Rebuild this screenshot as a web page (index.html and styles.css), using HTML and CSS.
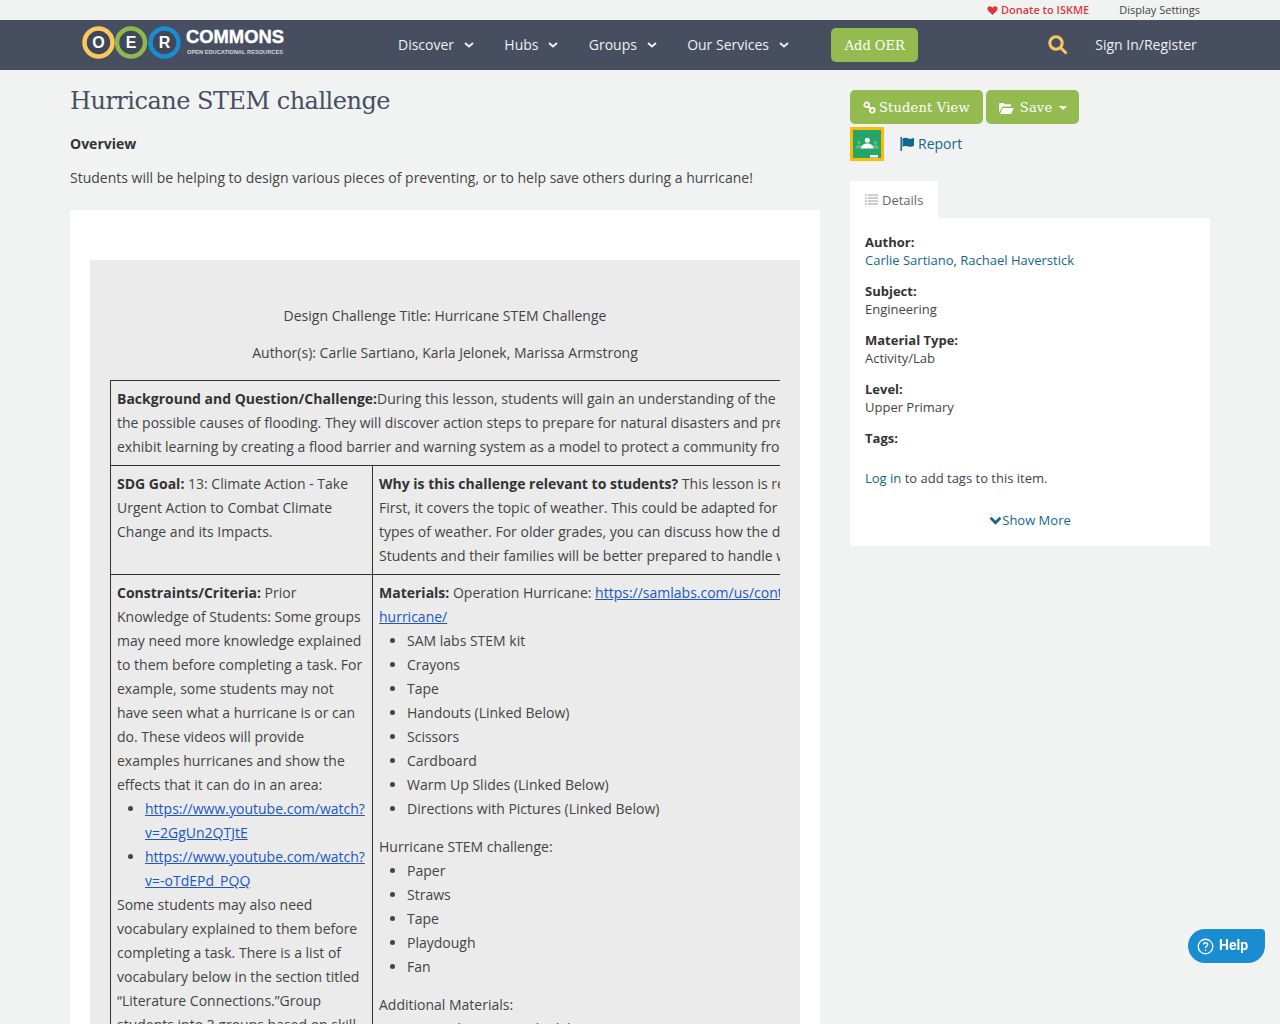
FILE: index.html
```html
<!DOCTYPE html>
<html lang="en">
<head>
    <meta charset="UTF-8">
    <title>Hurricane STEM challenge</title>
    <link rel="stylesheet" href="styles.css">
</head>
<body>
    <div class="top-bar">
        <a class="donate" href="#">
            <svg class="heart" viewBox="0 0 24 24"><path d="M12 22 2.600 12.400C.2 9.800.4 6 2.800 4c2.400-2 6-1.600 8 .8l1.200 1.400 1.200-1.400c2-2.400 5.600-2.800 8-.8 2.400 2 2.600 5.800.2 8.400z"/></svg>
            Donate to ISKME
        </a>
        <a class="display-settings" href="#">Display Settings</a>
    </div>

    <nav class="main-nav">
        <a class="logo" href="#">
            <svg width="205" height="40" viewBox="0 0 205 40">
                <circle cx="17.500" cy="17.500" r="14" class="ring ring-yellow"/>
                <circle cx="50" cy="17.500" r="14" class="ring ring-green"/>
                <circle cx="83.500" cy="17.500" r="14" class="ring ring-blue"/>
                <text x="17.500" y="23.200" class="logo-letter">O</text>
                <text x="50" y="23.200" class="logo-letter">E</text>
                <text x="83.500" y="23.200" class="logo-letter">R</text>
                <text x="105" y="18" class="logo-name" textLength="98" lengthAdjust="spacingAndGlyphs">COMMONS</text>
                <text x="106" y="28.500" class="logo-sub" textLength="96" lengthAdjust="spacingAndGlyphs">OPEN EDUCATIONAL RESOURCES</text>
            </svg>
        </a>
        <ul class="nav-links">
            <li><a href="#">Discover <svg class="nav-chevron" viewBox="0 0 10 6"><path d="M1 1l4 3.500L9 1"/></svg></a></li>
            <li><a href="#">Hubs <svg class="nav-chevron" viewBox="0 0 10 6"><path d="M1 1l4 3.500L9 1"/></svg></a></li>
            <li><a href="#">Groups <svg class="nav-chevron" viewBox="0 0 10 6"><path d="M1 1l4 3.500L9 1"/></svg></a></li>
            <li><a href="#">Our Services <svg class="nav-chevron" viewBox="0 0 10 6"><path d="M1 1l4 3.500L9 1"/></svg></a></li>
        </ul>
        <a class="btn add-oer" href="#">Add OER</a>
        <svg class="nav-search" viewBox="0 0 20 20"><circle cx="8" cy="8" r="6.200"/><path d="M12.500 12.500 18.500 18.500"/></svg>
        <a class="sign-in" href="#">Sign In/Register</a>
    </nav>

    <div class="page">
        <main class="content">
            <h1>Hurricane STEM challenge</h1>
            <h2 class="overview-title">Overview</h2>
            <p class="overview-text">Students will be helping to design various pieces of preventing, or to help save others during a hurricane!</p>

            <div class="card">
                <div class="challenge">
                    <div class="challenge-head">
                        <p>Design Challenge Title: Hurricane STEM Challenge</p>
                        <p>Author(s): Carlie Sartiano, Karla Jelonek, Marissa Armstrong</p>
                    </div>
                    <div class="table-clip">
                        <table class="challenge-table">
                            <colgroup>
                                <col class="col-left">
                                <col>
                            </colgroup>
                            <tr>
                                <td colspan="2"><strong>Background and Question/Challenge:</strong>During this lesson, students will gain an understanding of the<br>the possible causes of flooding. They will discover action steps to prepare for natural disasters and prevent damage. Students will<br>exhibit learning by creating a flood barrier and warning system as a model to protect a community from flooding.</td>
                            </tr>
                            <tr>
                                <td><strong>SDG Goal:</strong> 13: Climate Action - Take Urgent Action to Combat Climate Change and its Impacts.</td>
                                <td><strong>Why is this challenge relevant to students?</strong> This lesson is relevant for several reasons.<br>First, it covers the topic of weather. This could be adapted for other regions and<br>types of weather. For older grades, you can discuss how the damage can be reduced.<br>Students and their families will be better prepared to handle weather emergencies.</td>
                            </tr>
                            <tr>
                                <td>
                                    <strong>Constraints/Criteria:</strong> Prior Knowledge of Students: Some groups may need more knowledge explained to them before completing a task. For example, some students may not have seen what a hurricane is or can do. These videos will provide examples hurricanes and show the effects that it can do in an area:
                                    <ul>
                                        <li><a class="doc-link" href="#">https://www.youtube.com/watch?v=2GgUn2QTJtE</a></li>
                                        <li><a class="doc-link" href="#">https://www.youtube.com/watch?v=-oTdEPd_PQQ</a></li>
                                    </ul>
                                    Some students may also need vocabulary explained to them before completing a task. There is a list of vocabulary below in the section titled “Literature Connections.”Group students into 3 groups based on skill
                                </td>
                                <td>
                                    <strong>Materials:</strong> Operation Hurricane: <a class="doc-link" href="#">https://samlabs.com/us/content/operation-<br>hurricane/</a>
                                    <ul>
                                        <li>SAM labs STEM kit</li>
                                        <li>Crayons</li>
                                        <li>Tape</li>
                                        <li>Handouts (Linked Below)</li>
                                        <li>Scissors</li>
                                        <li>Cardboard</li>
                                        <li>Warm Up Slides (Linked Below)</li>
                                        <li>Directions with Pictures (Linked Below)</li>
                                    </ul>
                                    <p>Hurricane STEM challenge:</p>
                                    <ul>
                                        <li>Paper</li>
                                        <li>Straws</li>
                                        <li>Tape</li>
                                        <li>Playdough</li>
                                        <li>Fan</li>
                                    </ul>
                                    <p>Additional Materials:</p>
                                    <ul>
                                        <li>Materials to use in the lab</li>
                                    </ul>
                                </td>
                            </tr>
                        </table>
                    </div>
                </div>
            </div>
        </main>

        <aside class="sidebar">
            <div class="actions">
                <a class="btn student-view" href="#">
                    <svg class="icon-link" viewBox="0 0 14 14"><circle cx="4" cy="4" r="2.600"/><circle cx="10" cy="10" r="2.600"/><path d="M5 5l4 4"/></svg>
                    Student View
                </a>
                <a class="btn save" href="#">
                    <svg class="icon-folder" viewBox="0 0 16 13"><path d="M0 11V2c0-.6.400-1 1-1h4l1.200 1.500H12c.6 0 1 .4 1 1V5H4.500c-.6 0-1 .2-1.300.8zM1 13l2.800-6c.2-.4.500-.6 1-.6H16l-2.800 6c-.2.400-.5.600-1 .6z"/></svg>
                    <span>Save</span>
                    <span class="caret"></span>
                </a>
            </div>
            <div class="share">
                <a class="classroom" href="#">
                    <svg width="28" height="28" viewBox="0 0 28 28">
                        <rect width="28" height="28" fill="#25a667"/>
                        <circle cx="6" cy="12.500" r="1.700" fill="#57bb8a"/>
                        <circle cx="22.500" cy="12.500" r="1.700" fill="#57bb8a"/>
                        <path d="M2.500 18.500c0-2.500 1.800-3.800 3.500-3.800s3.500 1.300 3.500 3.800zM19 18.500c0-2.500 1.800-3.800 3.500-3.800S26 16 26 18.500z" fill="#57bb8a"/>
                        <circle cx="14.300" cy="10.300" r="2.500" fill="#fff"/>
                        <path d="M8 18.500c0-3.500 3.200-5 6.300-5s6.200 1.500 6.200 5z" fill="#fff"/>
                        <rect x="17" y="25" width="8" height="2.500" fill="#fff"/>
                    </svg>
                </a>
                <a class="report" href="#">
                    <svg class="icon-flag" viewBox="0 0 15 14"><path d="M1.200 0v14" class="flag-pole"/><path d="M2.500 1.500C5 0 7 1 8.500 1.500s3.500.5 5.500-.7v8c-2 1.200-4 1.200-5.500.7s-3.500-1.200-6 .2z"/></svg>
                    Report
                </a>
            </div>

            <div class="tab"><svg class="icon-list" viewBox="0 0 13 11"><path d="M0 0h2v2H0zM0 3h2v2H0zM0 6h2v2H0zM0 9h2v2H0zM3 0h10v2H3zM3 3h10v2H3zM3 6h10v2H3zM3 9h10v2H3z"/></svg>Details</div>
            <div class="details">
                <dl>
                    <dt>Author:</dt>
                    <dd><a href="#">Carlie Sartiano</a>, <a href="#">Rachael Haverstick</a></dd>
                    <dt>Subject:</dt>
                    <dd>Engineering</dd>
                    <dt>Material Type:</dt>
                    <dd>Activity/Lab</dd>
                    <dt>Level:</dt>
                    <dd>Upper Primary</dd>
                    <dt>Tags:</dt>
                    <dd class="tags"><a href="#">Log in</a> to add tags to this item.</dd>
                </dl>
                <a class="show-more" href="#">
                    <svg class="icon-chevron" viewBox="0 0 12 8"><path d="M1.500 1.500 6 6l4.500-4.500"/></svg>Show More
                </a>
            </div>
        </aside>
    </div>

    <a class="help" href="#">
        <svg class="icon-help" viewBox="0 0 18 18"><circle cx="9" cy="9" r="7.700"/><path d="M6.700 7c.2-1.300 1.100-2 2.300-2 1.300 0 2.300.8 2.300 2 0 1.800-2.300 1.700-2.300 3.500"/><path d="M9 12.200v1.500"/></svg>
        <span class="help-label">Help</span>
    </a>
</body>
</html>
```

FILE: styles.css
```css
/* General Reset */
* {
    box-sizing: border-box;
}

html, body {
    height: 100vh;
    overflow: hidden;
}

body {
    margin: 0;
    font-family: "Open Sans", sans-serif;
    font-size: 14px;
    line-height: 24px;
    background-color: #f1f3f2;
    color: #444;
}

a {
    text-decoration: none;
    color: #13678f;
}

/* Top bar */
.top-bar {
    height: 20px;
    display: flex;
    justify-content: flex-end;
    align-items: center;
    gap: 30px;
    padding-right: 80px;
    font-size: 11px;
    line-height: 20px;
}

.donate {
    display: flex;
    align-items: center;
    gap: 3px;
    color: #d9383a;
    font-weight: 600;
}

.heart {
    width: 11px;
    height: 11px;
    fill: #d9383a;
}

.display-settings {
    color: #444;
}

/* Main nav */
.main-nav {
    height: 50px;
    display: flex;
    align-items: center;
    padding-left: 81px;
    background-color: #474e60;
}

.logo {
    display: flex;
    width: 205px;
}

.ring {
    fill: #3f4759;
    stroke-width: 4.500;
}

.ring-yellow { stroke: #fcc85d; }
.ring-green { stroke: #8fb84c; }
.ring-blue { stroke: #1a8dd2; }

.logo-letter {
    font-family: "Liberation Sans", sans-serif;
    font-size: 16px;
    font-weight: 700;
    fill: #fff;
    text-anchor: middle;
}

.logo-name {
    font-family: "Liberation Sans", sans-serif;
    font-size: 18px;
    font-weight: 700;
    fill: #fff;
    stroke: #fff;
    stroke-width: 0.400;
}

.logo-sub {
    font-family: "Liberation Sans", sans-serif;
    font-size: 6px;
    font-weight: 700;
    fill: #d5d8de;
}

.nav-links {
    display: flex;
    gap: 30.250px;
    margin: 0 0 0 112px;
    padding: 0;
    list-style: none;
}

.nav-links a {
    display: flex;
    align-items: center;
    gap: 10px;
    color: #eef0f2;
}

.nav-chevron {
    width: 10px;
    height: 6px;
    fill: none;
    stroke: #eef0f2;
    stroke-width: 2;
}

.btn {
    display: inline-flex;
    align-items: center;
    height: 34px;
    padding: 1px 13px 0;
    border-radius: 5px;
    background-color: #94bb4f;
    color: #fff;
    font-family: "DejaVu Serif", serif;
    font-size: 13px;
}

.add-oer {
    margin-left: 42.250px;
    width: 87px;
    justify-content: center;
    padding: 1px 0 0;
}

.nav-search {
    width: 20px;
    height: 20px;
    margin-left: 130px;
    fill: none;
    stroke: #fcc85d;
    stroke-width: 3;
}

.sign-in {
    margin-left: 27px;
    color: #eef0f2;
}

/* Page layout */
.page {
    width: 1140px;
    margin: 0 auto;
    display: grid;
    grid-template-columns: 750px 360px;
    gap: 30px;
}

.content {
    padding-top: 16px;
}

h1 {
    margin: 0;
    height: 30px;
    font-family: "DejaVu Serif", serif;
    font-size: 24px;
    line-height: 30px;
    font-weight: 400;
    letter-spacing: -0.500px;
    color: #474e60;
}

.overview-title {
    margin: 16px 0 0;
    font-size: 14px;
    line-height: 24px;
    font-weight: 700;
    color: #333;
}

.overview-text {
    margin: 10px 0 20px;
}

.card {
    padding: 50px 20px 20px;
    background-color: #fff;
}

.challenge {
    padding: 44px 20px 20px;
    background-color: #ebebeb;
}

.challenge-head {
    margin-bottom: 15px;
    text-align: center;
}

.challenge-head p {
    margin: 0 0 13px;
}

.challenge-head p:last-child {
    margin-bottom: 0;
}

.table-clip {
    overflow: hidden;
}

.challenge-table {
    width: 1100px;
    table-layout: fixed;
    border-collapse: collapse;
}

.col-left {
    width: 262px;
}

.challenge-table td {
    padding: 6px;
    border: 1px solid #333;
    vertical-align: top;
}

.challenge-table strong {
    color: #333;
}

.challenge-table ul {
    margin: 0;
    padding-left: 28px;
}

.challenge-table p {
    margin: 14px 0 0;
}

.doc-link {
    color: #1a56c4;
    text-decoration: underline;
    overflow-wrap: anywhere;
}

/* Sidebar */
.sidebar {
    padding-top: 20px;
}

.actions {
    display: flex;
    gap: 3px;
}

.student-view {
    gap: 3px;
    letter-spacing: 0.200px;
}

.icon-link {
    width: 13px;
    height: 13px;
    fill: none;
    stroke: #fff;
    stroke-width: 1.800;
}

.save {
    gap: 6px;
    padding-right: 12px;
    letter-spacing: 0.200px;
}

.icon-folder {
    width: 15px;
    height: 12px;
    fill: #fff;
}

.caret {
    width: 0;
    height: 0;
    margin-left: 1px;
    border-top: 4px solid #fff;
    border-left: 4.500px solid transparent;
    border-right: 4.500px solid transparent;
}

.share {
    display: flex;
    align-items: center;
    gap: 16px;
    margin-top: 3px;
}

.classroom {
    display: flex;
    border: 3px solid #fbbc09;
}

.report {
    display: flex;
    align-items: center;
    gap: 3px;
}

.icon-flag {
    width: 15px;
    height: 14px;
    fill: #13678f;
}

.flag-pole {
    fill: none;
    stroke: #13678f;
    stroke-width: 1.500;
}

.tab {
    display: flex;
    align-items: center;
    gap: 4px;
    width: 88px;
    height: 37px;
    margin-top: 20px;
    padding-left: 15px;
    background-color: #fff;
    font-size: 13px;
    color: #666;
}

.icon-list {
    width: 13px;
    height: 11px;
    fill: #ccc;
}

.details {
    height: 328px;
    padding: 15px;
    background-color: #fff;
    font-size: 13px;
    line-height: 18px;
}

.details dl {
    margin: 0;
}

.details dt {
    font-weight: 700;
    color: #333;
}

.details dd {
    margin: 0 0 13px;
}

.details dd.tags {
    margin: 22px 0 0;
}

.show-more {
    display: flex;
    justify-content: center;
    align-items: center;
    margin-top: 24px;
}

.icon-chevron {
    width: 13px;
    height: 9px;
    fill: none;
    stroke: #13678f;
    stroke-width: 2.600;
}

/* Help button */
.help {
    position: fixed;
    left: 1188px;
    top: 929px;
    display: flex;
    align-items: center;
    gap: 5px;
    width: 77px;
    height: 34px;
    padding-left: 9px;
    border-radius: 17px 4px 17px 17px;
    background-color: #1a8dd2;
    color: #fff;
    font-family: Roboto, sans-serif;
    font-size: 14px;
    font-weight: 700;
}

.help-label {
    margin-top: -2px;
}

.icon-help {
    width: 17px;
    height: 17px;
    fill: none;
    stroke: #fff;
    stroke-width: 1.400;
}
```
